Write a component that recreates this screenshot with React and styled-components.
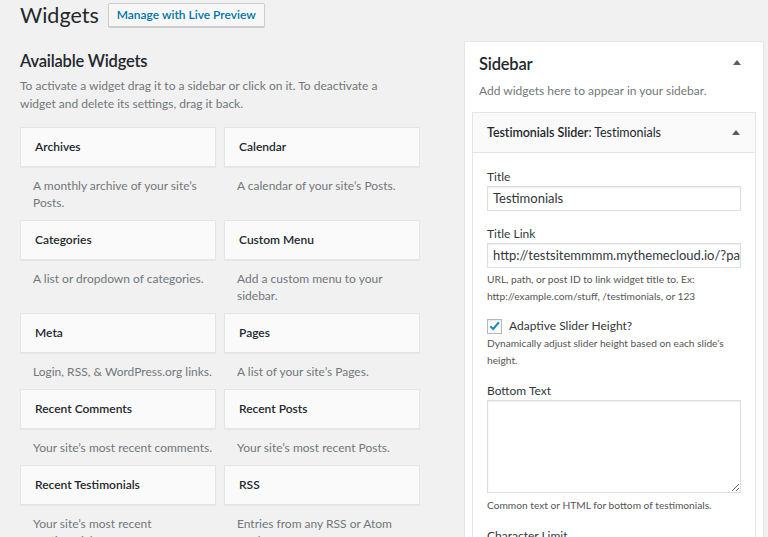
import React from "react";
import styled, { createGlobalStyle } from "styled-components";

const FONT = `Lato, "Noto Sans", Arial, sans-serif`;

const Global = createGlobalStyle`
  html, body { margin: 0; padding: 0; background: #f1f1f1; }
  body { font-family: ${FONT}; color: #444; font-size: 12px; }
  * { box-sizing: border-box; }
`;

const Page = styled.div`
  width: 768px;
  height: 537px;
  overflow: hidden;
  padding: 0 4px 0 20px;
`;

const Header = styled.header`
  display: flex;
  align-items: center;
  gap: 9px;
  height: 34px;
  padding-bottom: 4px;
`;

const PageTitle = styled.h1`
  margin: 0;
  font-size: 21.5px;
  font-weight: 400;
  line-height: 29px;
  color: #23282d;
`;

const ActionButton = styled.button`
  font-family: ${FONT};
  font-size: 12px;
  font-weight: 600;
  white-space: nowrap;
  flex: none;
  color: #0073aa;
  background: #f7f7f7;
  border: 1px solid #ccc;
  border-radius: 2px;
  height: 24px;
  padding: 0 8px;
  line-height: 22px;
  box-shadow: 0 1px 0 #ccc;
  cursor: pointer;
`;

const Columns = styled.div`
  display: grid;
  grid-template-columns: 424px 300px;
  column-gap: 20px;
  align-items: start;
  margin-top: 7px;
`;

const LeftColumn = styled.section`
  padding-top: 8px;
`;

const SectionTitle = styled.h2`
  margin: 0;
  font-size: 16.5px;
  letter-spacing: -0.2px;
  font-weight: 600;
  line-height: 24px;
  color: #23282d;
`;

const Intro = styled.p`
  margin: 4px 0 0;
  font-size: 12px;
  line-height: 18px;
  color: #72777c;
  white-space: pre-line;
`;

const WidgetGrid = styled.div`
  display: grid;
  grid-template-columns: 196px 196px;
  column-gap: 8px;
  margin-top: 14px;
`;

const WidgetItem = styled.div``;

const WidgetCard = styled.div`
  height: 40px;
  background: #fafafa;
  border: 1px solid #e5e5e5;
  box-shadow: 0 1px 1px rgba(0, 0, 0, 0.04);
  padding: 0 14px;
  font-size: 12px;
  font-weight: 600;
  line-height: 38px;
  color: #23282d;
`;

const WidgetDesc = styled.p`
  margin: 0;
  padding: 10px 4px 9px 13px;
  font-size: 12px;
  line-height: 17px;
  color: #72777c;
  white-space: pre-line;
`;

const SidebarBox = styled.section`
  background: #fff;
  border: 1px solid #e5e5e5;
  box-shadow: 0 1px 1px rgba(0, 0, 0, 0.04);
  padding: 10px 7px 0;
  height: 520px;
`;

const SidebarHead = styled.div`
  display: flex;
  justify-content: space-between;
  align-items: flex-start;
  padding: 0 15px 0 7px;
`;

const Arrow = styled.span`
  display: block;
  width: 0;
  height: 0;
  border-left: 4px solid transparent;
  border-right: 4px solid transparent;
  border-bottom: 5px solid #555d66;
  margin-top: ${(p) => p.$top || 0}px;
`;

const SidebarDesc = styled.p`
  margin: 6px 0 0;
  padding: 0 7px;
  font-size: 12px;
  line-height: 18px;
  color: #72777c;
`;

const WidgetBox = styled.div`
  margin-top: 12px;
  border: 1px solid #e5e5e5;
  background: #fff;
`;

const WidgetHead = styled.div`
  height: 40px;
  background: #fafafa;
  border-bottom: 1px solid #e5e5e5;
  display: flex;
  align-items: center;
  justify-content: space-between;
  padding: 0 15px 0 14px;
`;

const WidgetTitle = styled.h3`
  margin: 0;
  font-size: 12.5px;
  letter-spacing: -0.05px;
  font-weight: 600;
  color: #23282d;
`;

const InTitle = styled.span`
  font-weight: 400;
`;

const WidgetBody = styled.div`
  padding: 16px 14px 0;
`;

const Field = styled.div`
  margin-top: ${(p) => p.$gap ?? 15}px;
`;

const Label = styled.label`
  display: block;
  font-size: 12px;
  line-height: 16px;
  color: #32373c;
`;

const TextBox = styled.div`
  margin-top: 1px;
  height: 25px;
  border: 1px solid #ddd;
  box-shadow: inset 0 1px 2px rgba(0, 0, 0, 0.07);
  background: #fff;
  padding: 0 5px;
  font-size: 13px;
  line-height: 23px;
  color: #32373c;
  white-space: nowrap;
  overflow: hidden;
`;

const TextArea = styled.textarea`
  display: block;
  margin-top: 1px;
  width: 100%;
  height: 93px;
  border: 1px solid #ddd;
  box-shadow: inset 0 1px 2px rgba(0, 0, 0, 0.07);
  background: #fff;
  font-family: ${FONT};
  font-size: 13px;
  resize: vertical;
  outline: none;
`;

const Help = styled.p`
  margin: ${(p) => p.$top ?? 3}px 0 0;
  font-size: 10.2px;
  line-height: 17px;
  color: #555;
  white-space: pre-line;
`;

const CheckRow = styled.div`
  display: flex;
  align-items: center;
  gap: 7px;
`;

const CheckBox = styled.span`
  width: 15px;
  height: 15px;
  border: 1px solid #b4b9be;
  background: #fff;
  box-shadow: inset 0 1px 2px rgba(0, 0, 0, 0.1);
  display: flex;
  align-items: center;
  justify-content: center;
`;

const CheckLabel = styled.span`
  font-size: 12px;
  line-height: 16px;
  color: #32373c;
`;

const widgets = [
  ["Archives", "A monthly archive of your site\u2019s\nPosts."],
  ["Calendar", "A calendar of your site\u2019s Posts."],
  ["Categories", "A list or dropdown of categories."],
  ["Custom Menu", "Add a custom menu to your\nsidebar."],
  ["Meta", "Login, RSS, & WordPress.org links."],
  ["Pages", "A list of your site\u2019s Pages."],
  ["Recent Comments", "Your site\u2019s most recent comments."],
  ["Recent Posts", "Your site\u2019s most recent Posts."],
  ["Recent Testimonials", "Your site\u2019s most recent\nTestimonials."],
  ["RSS", "Entries from any RSS or Atom\nfeed."],
];

export default function App() {
  return (
    <Page>
      <Global />
      <Header>
        <PageTitle>Widgets</PageTitle>
        <ActionButton>Manage with Live Preview</ActionButton>
      </Header>
      <Columns>
        <LeftColumn>
          <SectionTitle>Available Widgets</SectionTitle>
          <Intro>
            {"To activate a widget drag it to a sidebar or click on it. To deactivate a\nwidget and delete its settings, drag it back."}
          </Intro>
          <WidgetGrid>
            {widgets.map(([name, desc]) => (
              <WidgetItem key={name}>
                <WidgetCard>{name}</WidgetCard>
                <WidgetDesc>{desc}</WidgetDesc>
              </WidgetItem>
            ))}
          </WidgetGrid>
        </LeftColumn>
        <SidebarBox>
          <SidebarHead>
            <SectionTitle>Sidebar</SectionTitle>
            <Arrow $top={8} />
          </SidebarHead>
          <SidebarDesc>Add widgets here to appear in your sidebar.</SidebarDesc>
          <WidgetBox>
            <WidgetHead>
              <WidgetTitle>
                Testimonials Slider<InTitle>: Testimonials</InTitle>
              </WidgetTitle>
              <Arrow />
            </WidgetHead>
            <WidgetBody>
              <Field $gap={0}>
                <Label>Title</Label>
                <TextBox>Testimonials</TextBox>
              </Field>
              <Field>
                <Label>Title Link</Label>
                <TextBox>http://testsitemmmm.mythemecloud.io/?page_id=12</TextBox>
                <Help>
                  {"URL, path, or post ID to link widget title to. Ex:\nhttp://example.com/stuff, /testimonials, or 123"}
                </Help>
              </Field>
              <Field $gap={13}>
                <CheckRow>
                  <CheckBox>
                    <svg width="14" height="14" viewBox="0 0 14 14">
                      <path d="M2.5 7.2 L5.6 10.2 L11.8 3" fill="none" stroke="#1e8cbe" strokeWidth="2.2" />
                    </svg>
                  </CheckBox>
                  <CheckLabel>Adaptive Slider Height?</CheckLabel>
                </CheckRow>
                <Help $top={1}>
                  {"Dynamically adjust slider height based on each slide\u2019s\nheight."}
                </Help>
              </Field>
              <Field $gap={14}>
                <Label>Bottom Text</Label>
                <TextArea readOnly value="" />
                <Help $top={4}>Common text or HTML for bottom of testimonials.</Help>
              </Field>
              <Field $gap={14}>
                <Label>Character Limit</Label>
              </Field>
            </WidgetBody>
          </WidgetBox>
        </SidebarBox>
      </Columns>
    </Page>
  );
}
